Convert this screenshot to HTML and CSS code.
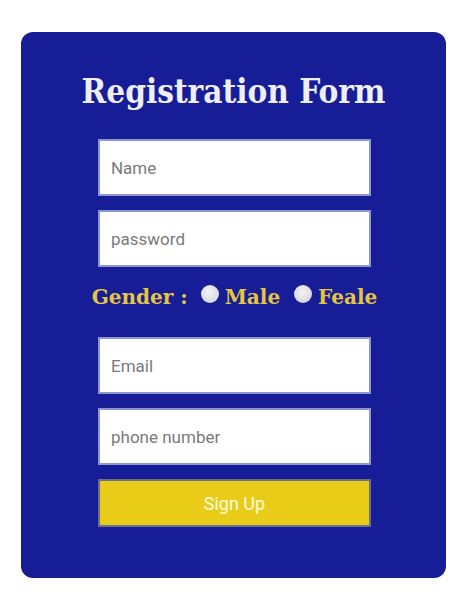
FILE: index.html
```html
<!DOCTYPE html>
<html>
<head>
<meta charset="utf-8">
<link rel="stylesheet" href="styles.css">
</head>
<body>
<div class="card">
  <h1 class="title">Registration Form</h1>
  <form class="form">
    <input class="field" type="text" placeholder="Name">
    <input class="field" type="password" placeholder="password">
    <div class="gender">
      <span class="label">Gender :</span>
      <label class="opt"><span class="radio"></span>Male</label>
      <label class="opt"><span class="radio"></span>Feale</label>
    </div>
    <input class="field" type="email" placeholder="Email">
    <input class="field" type="text" placeholder="phone number">
    <button class="btn" type="button">Sign Up</button>
  </form>
</div>
</body>
</html>
```
FILE: styles.css
```css
html, body {
  margin: 0;
  padding: 0;
  background: #ffffff;
}
body {
  padding: 32px 28px 0 21px;
}
.card {
  width: 425px;
  height: 546px;
  box-sizing: border-box;
  background: #171d97;
  border-radius: 12px;
  padding-top: 39px;
  display: flex;
  flex-direction: column;
  align-items: center;
}
.title {
  margin: 0;
  font-family: "DejaVu Serif", serif;
  font-stretch: semi-condensed;
  font-weight: bold;
  font-size: 33px;
  line-height: 42px;
  color: #eeeef8;
}
.form {
  margin-top: 26px;
  padding-left: 2px;
  display: flex;
  flex-direction: column;
  align-items: center;
}
.field {
  width: 273px;
  height: 57px;
  box-sizing: border-box;
  border: 2px solid #8c96cf;
  background: #ffffff;
  padding: 0 11px;
  margin: 0 0 14px 0;
  font-family: Roboto, "Noto Sans", sans-serif;
  font-size: 17px;
  color: #333;
  outline: none;
}
.field::placeholder {
  color: #7a7a7a;
}
.gender {
  display: flex;
  align-items: center;
  height: 30px;
  margin: 1px 0 25px 0;
  font-family: "DejaVu Serif", serif;
  font-weight: bold;
  font-size: 20px;
  color: #e6c640;
}
.label {
  margin-right: 13px;
}
.opt {
  display: flex;
  align-items: center;
}
.opt + .opt {
  margin-left: 14px;
}
.radio {
  width: 18px;
  height: 18px;
  border-radius: 50%;
  background: radial-gradient(circle at 45% 40%, #f2f2f6 0%, #dcdce4 60%, #c4c4d0 100%);
  margin-right: 6px;
  margin-top: -6px;
}
.btn {
  width: 273px;
  height: 48px;
  box-sizing: border-box;
  border: 2px solid #6e6e86;
  background: #e8cc18;
  color: #fffbe0;
  font-family: Roboto, "Noto Sans", sans-serif;
  font-size: 18px;
  padding: 0;
}
```
